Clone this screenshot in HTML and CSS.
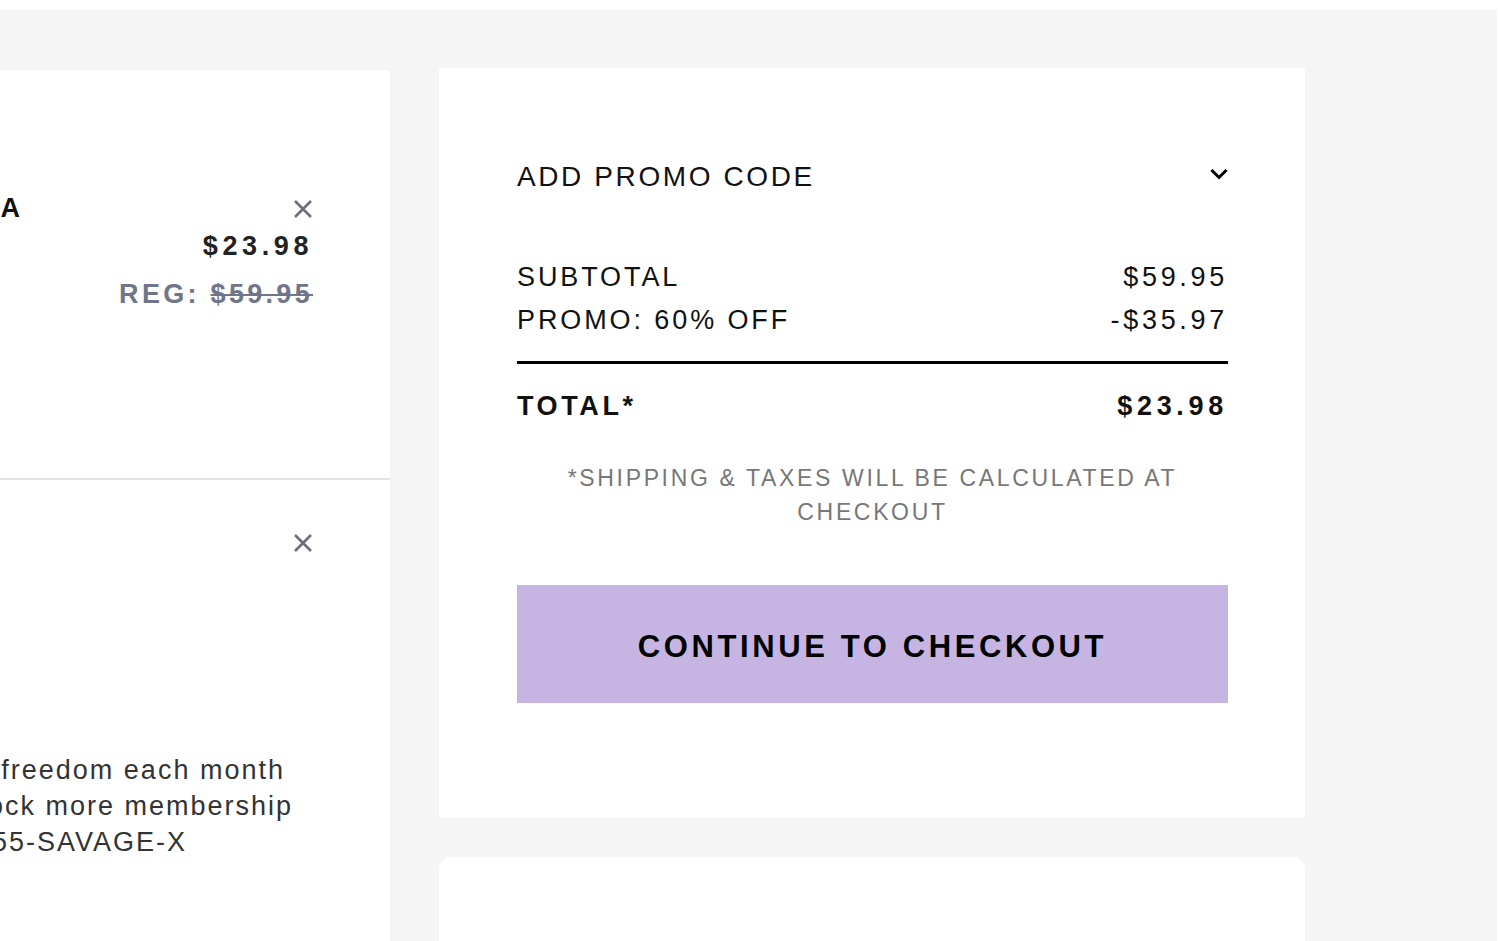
FILE: index.html
```html
<!DOCTYPE html>
<html>
<head>
    <title>Shopping Bag</title>
    <link rel="stylesheet" href="styles.css">
</head>
<body>
    <div class="page">
        <div class="cart">
            <section class="bag-card">
                <h2 class="bag-title">BAG (2)</h2>

                <div class="bag-item">
                    <div class="item-thumb"></div>
                    <div class="item-details">
                        <div class="item-name">UNLINED BRA</div>
                    </div>
                    <div class="item-price">
                        <button class="remove-btn" aria-label="Remove item">
                            <svg width="20" height="20" viewBox="0 0 20 20"><path d="M2 2L18 18M18 2L2 18"/></svg>
                        </button>
                        <div class="price-now">$23.98</div>
                        <div class="price-reg">REG: <s>$59.95</s></div>
                    </div>
                </div>

                <div class="bag-item">
                    <div class="item-thumb"></div>
                    <div class="item-details">
                        <div class="item-name">VIP</div>
                        <div class="item-sub">Membership</div>
                        <p class="item-note">
                            <span>You'll have the freedom each month</span>
                            <span>Or, skip it. Unlock more membership</span>
                            <span>perks. Call 1-855-SAVAGE-X</span>
                        </p>
                    </div>
                    <div class="item-price">
                        <button class="remove-btn" aria-label="Remove item">
                            <svg width="20" height="20" viewBox="0 0 20 20"><path d="M2 2L18 18M18 2L2 18"/></svg>
                        </button>
                    </div>
                </div>
            </section>

            <div class="summary-col">
                <section class="summary-card">
                    <div class="promo-toggle">
                        <span>ADD PROMO CODE</span>
                        <svg class="chevron" width="18" height="12" viewBox="0 0 18 12"><polyline points="1.5,2 9,9.5 16.5,2"/></svg>
                    </div>

                    <div class="summary-lines">
                        <div class="summary-row">
                            <span>SUBTOTAL</span>
                            <span class="amount">$59.95</span>
                        </div>
                        <div class="summary-row">
                            <span>PROMO: 60% OFF</span>
                            <span class="amount">-$35.97</span>
                        </div>
                    </div>

                    <div class="summary-row total-row">
                        <span>TOTAL*</span>
                        <span class="amount">$23.98</span>
                    </div>

                    <p class="tax-note">*SHIPPING &amp; TAXES WILL BE CALCULATED AT CHECKOUT</p>

                    <button class="checkout-btn">CONTINUE TO CHECKOUT</button>
                </section>

                <section class="info-card"></section>
            </div>
        </div>
    </div>
</body>
</html>
```

FILE: styles.css
```css
html, body {
    height: 100%;
    overflow: hidden;
}

body {
    margin: 0;
    font-family: "Liberation Sans", Arial, sans-serif;
    background: #fff;
    color: #111;
}

.page {
    margin: 10px 3px 0 0;
    padding-top: 58px;
    min-height: calc(100% - 10px);
    background-color: #f5f5f5;
}

.cart {
    display: grid;
    grid-template-columns: 914px 866px;
    column-gap: 49px;
    align-items: start;
    margin-left: -524px;
}

/* Bag (left column) */
.bag-card {
    margin-top: 2px;
    min-height: 900px;
    background-color: #fff;
    border-radius: 4px 4px 0 0;
}

.bag-title {
    margin: 0;
    padding: 40px 77px 0 76px;
    font-size: 27px;
    line-height: 36px;
    letter-spacing: 3.8px;
}

.bag-item {
    display: grid;
    grid-template-columns: 196px minmax(0, 1fr) auto;
    column-gap: 40px;
    padding: 44px 77px 44px 76px;
}

.bag-item + .bag-item {
    border-top: 2px solid #e2e2e2;
}

.item-thumb {
    height: 244px;
    background-color: #f2f2f2;
}

.item-name {
    font-size: 27px;
    font-weight: bold;
    line-height: 36px;
    letter-spacing: 3.8px;
    white-space: nowrap;
}

.bag-item:first-of-type .item-name {
    margin-left: 8px;
}

.item-sub {
    font-size: 27px;
    line-height: 36px;
    letter-spacing: 2px;
    white-space: nowrap;
}

.item-note {
    margin: 156px 0 0;
    font-size: 27px;
    line-height: 36px;
    letter-spacing: 2px;
    color: #333;
}

.item-note span {
    display: block;
    white-space: nowrap;
}

.item-price {
    display: flex;
    flex-direction: column;
    align-items: flex-end;
    padding-top: 9px;
    text-align: right;
    font-size: 27px;
    font-weight: bold;
    line-height: 48px;
}

.remove-btn {
    display: block;
    width: 20px;
    height: 20px;
    margin-bottom: 3px;
    padding: 0;
    border: none;
    background: none;
    cursor: pointer;
}

.remove-btn svg {
    display: block;
    fill: none;
    stroke: #6b6e7e;
    stroke-width: 2.6;
}

.price-now {
    color: #222;
    letter-spacing: 4.6px;
}

.price-reg {
    color: #70758a;
    letter-spacing: 3.3px;
}

.price-reg s {
    text-decoration-thickness: 2px;
}

/* Order summary (right column) */
.summary-card {
    padding: 91px 77px 115px 78px;
    background-color: #fff;
}

.promo-toggle {
    display: flex;
    justify-content: space-between;
    align-items: center;
    font-size: 28px;
    line-height: 36px;
    letter-spacing: 2.6px;
    cursor: pointer;
}

.chevron {
    margin-bottom: 6px;
    fill: none;
    stroke: #000;
    stroke-width: 3;
}

.summary-lines {
    margin-top: 61px;
    padding-bottom: 19px;
    border-bottom: 3px solid #000;
}

.summary-row {
    display: flex;
    justify-content: space-between;
    font-size: 27px;
    line-height: 43px;
    letter-spacing: 2.9px;
}

.summary-row .amount {
    letter-spacing: 3.7px;
}

.total-row {
    padding-top: 21px;
    font-weight: bold;
    letter-spacing: 3.6px;
}

.total-row .amount {
    letter-spacing: 4.7px;
}

.tax-note {
    margin: 33px 0 0;
    font-size: 23px;
    line-height: 34px;
    letter-spacing: 2.65px;
    color: #777;
    text-align: center;
}

.checkout-btn {
    display: block;
    width: 100%;
    height: 118px;
    margin-top: 56px;
    padding: 6px 0 0;
    border: none;
    background-color: #c6b4e2;
    color: #000;
    font-family: inherit;
    font-size: 31px;
    font-weight: bold;
    letter-spacing: 3.6px;
    cursor: pointer;
}

.info-card {
    height: 300px;
    margin-top: 39px;
    background-color: #fff;
    border-radius: 12px;
}
```
